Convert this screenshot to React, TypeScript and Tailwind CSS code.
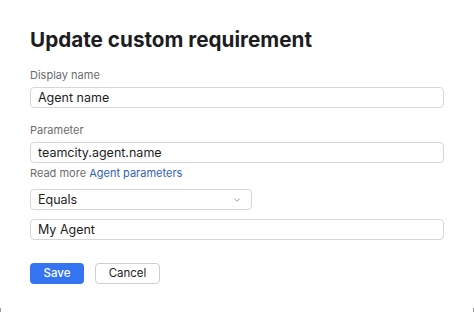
import { ChevronDown } from 'lucide-react'

const font = { fontFamily: 'Inter, "Liberation Sans", sans-serif' }

function Field({ value, className = '' }: { value: string; className?: string }) {
  return (
    <div
      className={`h-[21px] rounded-[4px] border border-[#d6d6d6] bg-white pl-[7px] text-[12.5px] leading-[19px] text-[#1e1e1e] ${className}`}
    >
      {value}
    </div>
  )
}

function Label({ children }: { children: string }) {
  return <div className="text-[11px] leading-[16px] text-[#6c6c6c]">{children}</div>
}

export default function App() {
  return (
    <div className="flex h-[312px] w-[474px] flex-col bg-white" style={font}>
      <div className="flex flex-col px-[30px] pt-[26px]">
        {/* Header */}
        <h1 className="text-[20.7px] font-bold leading-[27px] text-[#1d1d1f]">
          Update custom requirement
        </h1>

        <div className="mt-[14px]">
          <Label>Display name</Label>
          <Field value="Agent name" className="mt-[4px] w-[414px]" />
        </div>

        <div className="mt-[14px]">
          <Label>Parameter</Label>
          <Field value="teamcity.agent.name" className="mt-[4px] w-[414px]" />
          <div className="mt-[2px] text-[11px] leading-[16px] text-[#6c6c6c]">
            Read more <span className="text-[#3461b5]">Agent parameters</span>
          </div>
        </div>

        {/* Condition select */}
        <div className="mt-[8px] flex h-[21px] w-[222px] items-center justify-between rounded-[4px] border border-[#d6d6d6] bg-white pl-[7px] pr-[9px] text-[12.5px] leading-[19px] text-[#1e1e1e]">
          <span>Equals</span>
          <ChevronDown className="h-[10px] w-[10px] text-[#8a8a8a]" strokeWidth={2} />
        </div>

        <Field value="My Agent" className="mt-[9px] w-[414px]" />

        <div className="mt-[23px] flex gap-[11px]">
          <button className="h-[21px] w-[54px] rounded-[4px] bg-[#3574f0] text-[11.5px] leading-[19px] font-medium text-white">
            Save
          </button>
          <button className="h-[21px] w-[65px] rounded-[4px] border border-[#cfcfcf] bg-white text-[11.5px] leading-[19px] text-[#1e1e1e]">
            Cancel
          </button>
        </div>
      </div>
      <div className="flex-1" />
      <div className="h-[4px] border-x border-[#9a9a9a]" />
    </div>
  )
}
